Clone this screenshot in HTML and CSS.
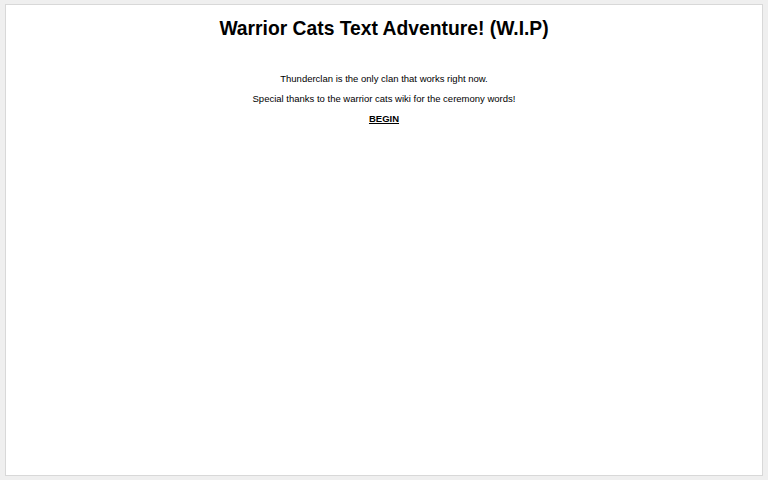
FILE: index.html
```html
<!DOCTYPE html>
<html>
<head>
<meta charset="utf-8">
<link rel="stylesheet" href="styles.css">
</head>
<body>
<main class="panel">
  <h1 class="title">Warrior Cats Text Adventure! (W.I.P)</h1>
  <p class="note">Thunderclan is the only clan that works right now.</p>
  <p class="note">Special thanks to the warrior cats wiki for the ceremony words!</p>
  <a class="begin" href="#">BEGIN</a>
</main>
</body>
</html>
```
FILE: styles.css
```css
html, body {
  height: 100%;
}
body {
  margin: 0;
  padding: 4px 5px 4px 5px;
  box-sizing: border-box;
  background: #efefef;
  font-family: "Liberation Sans", Arial, sans-serif;
  color: #000;
}
.panel {
  height: 100%;
  box-sizing: border-box;
  background: #fff;
  border: 1px solid #d8d8d8;
  display: flex;
  flex-direction: column;
  align-items: center;
  padding-top: 12px;
}
.title {
  margin: 0 0 32px;
  font-size: 19.3px;
  font-weight: bold;
  line-height: 24px;
}
.note {
  margin: 0 0 8px;
  font-size: 9.5px;
  line-height: 12px;
}
.begin {
  font-size: 9.5px;
  line-height: 12px;
  font-weight: bold;
  color: #000;
  text-decoration: underline;
}
```
